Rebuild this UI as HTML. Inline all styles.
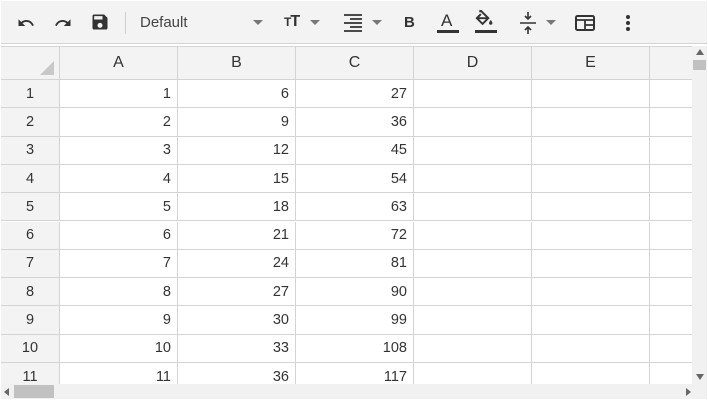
<!DOCTYPE html>
<html><head><meta charset="utf-8"><style>
*{box-sizing:border-box;margin:0;padding:0}
body{width:708px;height:400px;overflow:hidden;background:#fff;font-family:"Liberation Sans",sans-serif;color:#333;position:relative}
.frame{position:absolute;left:0;top:0;width:708px;height:400px;border:1px solid #c8c8c8}
.tb{position:absolute;left:1px;top:1px;width:706px;height:43px;background:#f3f3f3;border-bottom:1px solid #d4d4d4}
.ic{position:absolute;top:12px}
.arr{position:absolute;top:19px;width:0;height:0;border-left:5px solid transparent;border-right:5px solid transparent;border-top:5px solid #777}
.grid{position:absolute;left:1px;top:46px;width:691px;height:338px;overflow:hidden;border-top:1px solid #d4d4d4}
.hdr{position:absolute;background:#f3f3f3;border-right:1px solid #d4d4d4;border-bottom:1px solid #d4d4d4;font-size:16px;color:#333;display:flex;align-items:center;justify-content:center}
.cell{position:absolute;border-right:1px solid #d4d4d4;border-bottom:1px solid #d4d4d4;font-size:14.5px;color:#333;display:flex;align-items:center;justify-content:flex-end;padding-right:6px;background:#fff}
.rh{position:absolute;left:0;width:59px;background:#f3f3f3;border-right:1px solid #d4d4d4;border-bottom:1px solid #d4d4d4;font-size:14.5px;display:flex;align-items:center;justify-content:center;color:#333}
.vs{position:absolute;left:692px;top:46px;width:15px;height:338px;background:#f1f1f1}
.hs{position:absolute;left:1px;top:384px;width:706px;height:15px;background:#f1f1f1}
</style></head><body>
<div class="tb">
 <svg class="ic" style="left:14px;top:13px" width="22" height="18" viewBox="0 0 24 24"><path d="M12.5 8c-2.65 0-5.05 1-6.9 2.6L2 7v9h9l-3.62-3.62c1.39-1.16 3.16-1.88 5.12-1.88 3.54 0 6.55 2.31 7.6 5.5l2.37-.78C21.08 11.03 17.15 8 12.5 8z" fill="#333"/></svg>
 <svg class="ic" style="left:51px;top:13px" width="22" height="18" viewBox="0 0 24 24"><path d="M18.4 10.6C16.55 9 14.15 8 11.5 8c-4.65 0-8.58 3.03-9.96 7.22L3.9 16c1.05-3.19 4.05-5.5 7.6-5.5 1.95 0 3.73.72 5.12 1.88L13 16h9V7l-3.6 3.6z" fill="#333"/></svg>
 <svg class="ic" style="left:89px;top:11px" width="20" height="20" viewBox="0 0 24 24"><path d="M17 3H5a2 2 0 0 0-2 2v14a2 2 0 0 0 2 2h14a2 2 0 0 0 2-2V7l-4-4zm-5 16a3 3 0 1 1 0-6 3 3 0 0 1 0 6zm3-10H5V5h10v4z" fill="#333"/></svg>
 <div style="position:absolute;left:124px;top:11px;width:1px;height:22px;background:#d0d0d0"></div>
 <div style="position:absolute;left:139px;top:13px;font-size:15px;color:#444">Default</div>
 <div class="arr" style="left:252px"></div>
 <div style="position:absolute;left:283px;top:12px;font-size:16px;font-weight:bold;color:#333;letter-spacing:-1px"><span style="font-size:12px">T</span>T</div>
 <div class="arr" style="left:309px"></div>
 <svg class="ic" style="left:343px;top:13px" width="18" height="18" viewBox="0 0 18 18"><path d="M0 1h18M6 5h12M0 9h18M6 13h12M0 17h18" stroke="#333" stroke-width="1.8"/></svg>
 <div class="arr" style="left:371px"></div>
 <div style="position:absolute;left:403px;top:13px;font-size:15px;font-weight:bold;color:#333">B</div>
 <div style="position:absolute;left:440px;top:10px;font-size:17px;color:#333">A</div>
 <div style="position:absolute;left:436px;top:29px;width:22px;height:3px;background:#333"></div>
 <svg class="ic" style="left:474px;top:9px" width="20" height="18" viewBox="0 0 24 22"><path d="M5 2l2-1 9 9-7 7-7-7 5-5M2 10h14" stroke="#333" stroke-width="2.4" fill="none"/><path d="M19 12c-1.5 2-2 3-2 4a2 2 0 0 0 4 0c0-1-.5-2-2-4z" fill="#333"/></svg>
 <div style="position:absolute;left:474px;top:29px;width:22px;height:3px;background:#333"></div>
 <svg class="ic" style="left:519px;top:11px" width="16" height="22" viewBox="0 0 16 22"><path d="M0 11h16M8 0v7M5 4l3 3 3-3M8 22v-7M5 18l3-3 3 3" stroke="#333" stroke-width="1.6" fill="none"/></svg>
 <div class="arr" style="left:545px"></div>
 <svg class="ic" style="left:574px;top:14px" width="20" height="16" viewBox="0 0 20 16"><rect x="1" y="1" width="18" height="14" rx="1.5" fill="none" stroke="#333" stroke-width="2"/><path d="M1 5h18M10 5v10M10 10h9" stroke="#333" stroke-width="1.8"/></svg>
 <svg class="ic" style="left:624px;top:13px" width="6" height="18" viewBox="0 0 6 18"><circle cx="3" cy="3" r="2" fill="#333"/><circle cx="3" cy="9" r="2" fill="#333"/><circle cx="3" cy="15" r="2" fill="#333"/></svg>
</div>
<div class="grid">
 <div class="hdr" style="left:0;top:0;width:59px;height:33px"><div style="position:absolute;right:5px;bottom:4px;width:0;height:0;border-left:14px solid transparent;border-bottom:14px solid #c8c8c8"></div></div>
 <div class="hdr" style="left:59px;top:0;width:118px;height:33px">A</div>
 <div class="hdr" style="left:177px;top:0;width:118px;height:33px">B</div>
 <div class="hdr" style="left:295px;top:0;width:118px;height:33px">C</div>
 <div class="hdr" style="left:413px;top:0;width:118px;height:33px">D</div>
 <div class="hdr" style="left:531px;top:0;width:118px;height:33px">E</div>
 <div class="hdr" style="left:649px;top:0;width:118px;height:33px"></div>
</div>
<div class="vs"><div style="position:absolute;left:4px;top:3px;border-left:4px solid transparent;border-right:4px solid transparent;border-bottom:6px solid #666"></div><div style="position:absolute;left:1px;top:14px;width:13px;height:10px;background:#c1c1c1"></div><div style="position:absolute;left:4px;top:328px;border-left:4px solid transparent;border-right:4px solid transparent;border-top:6px solid #666"></div></div>
<div class="hs"><div style="position:absolute;left:3px;top:4px;border-top:4px solid transparent;border-bottom:4px solid transparent;border-right:5px solid #666"></div><div style="position:absolute;left:13px;top:1px;width:40px;height:13px;background:#c1c1c1"></div><div style="position:absolute;left:685px;top:4px;border-top:4px solid transparent;border-bottom:4px solid transparent;border-left:5px solid #666"></div></div>
<script>
var g=document.querySelector('.grid'),h='';
for(var r=1;r<=11;r++){var t=33+(r-1)*28.3,hh=28.3;
h+='<div class="rh" style="top:'+t+'px;height:'+hh+'px">'+r+'</div>';
var v=[r,3*r+3,9*r+18,'','',''];
for(var c=0;c<6;c++)h+='<div class="cell" style="left:'+(59+c*118)+'px;top:'+t+'px;width:118px;height:'+hh+'px">'+v[c]+'</div>';}
g.insertAdjacentHTML('beforeend',h);
</script>
</body></html>
